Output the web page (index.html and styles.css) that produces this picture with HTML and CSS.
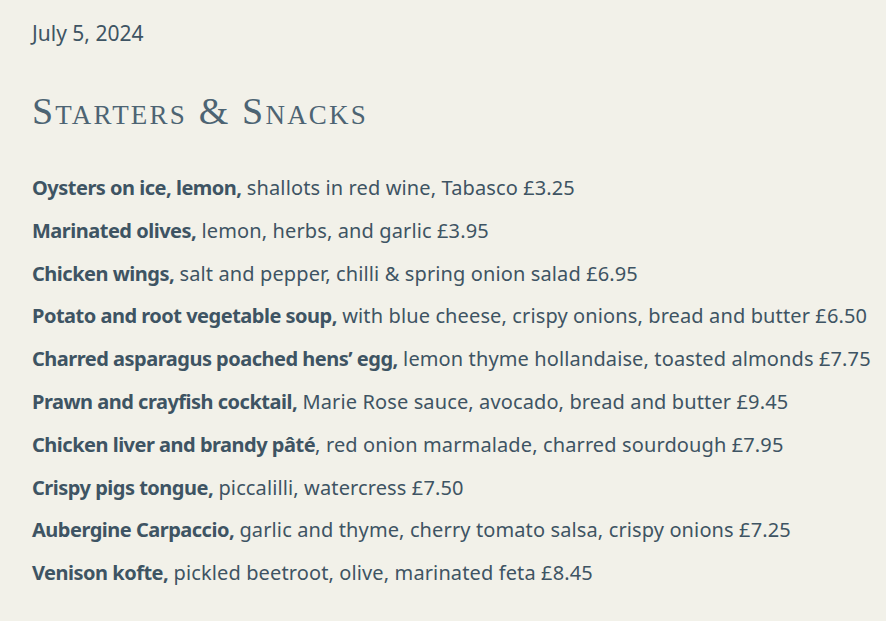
FILE: index.html
```html
<!DOCTYPE html>
<html lang="en">
<head>
<meta charset="utf-8">
<title>Menu</title>
<link rel="stylesheet" href="styles.css">
</head>
<body>
<main class="page">
  <p class="date">July 5, 2024</p>
  <h2 class="section-title">Starters &amp; Snacks</h2>
  <ul class="menu">
    <li><strong>Oysters on ice, lemon,</strong> shallots in red wine, Tabasco £3.25</li>
    <li><strong>Marinated olives,</strong> lemon, herbs, and garlic £3.95</li>
    <li><strong>Chicken wings,</strong> salt and pepper, chilli &amp; spring onion salad £6.95</li>
    <li><strong>Potato and root vegetable soup,</strong> with blue cheese, crispy onions, bread and butter £6.50</li>
    <li><strong>Charred asparagus poached hens’ egg,</strong> lemon thyme hollandaise, toasted almonds £7.75</li>
    <li><strong>Prawn and crayfish cocktail,</strong> Marie Rose sauce, avocado, bread and butter £9.45</li>
    <li><strong>Chicken liver and brandy pâté</strong>, red onion marmalade, charred sourdough £7.95</li>
    <li><strong>Crispy pigs tongue,</strong> piccalilli, watercress £7.50</li>
    <li><strong>Aubergine Carpaccio,</strong> garlic and thyme, cherry tomato salsa, crispy onions £7.25</li>
    <li><strong>Venison kofte,</strong> pickled beetroot, olive, marinated feta £8.45</li>
  </ul>
</main>
</body>
</html>
```
FILE: styles.css
```css
html, body {
  margin: 0;
  padding: 0;
  background: #f2f1e9;
}
body {
  font-family: "Noto Sans", "Open Sans", sans-serif;
  color: #3e5463;
}
.page {
  padding: 20px 0 0 32px;
}
.date {
  margin: 0;
  font-size: 21px;
  line-height: 26px;
}
.section-title {
  margin: 43px 0 40px;
  font-family: "Liberation Serif", serif;
  font-weight: normal;
  font-variant: small-caps;
  font-size: 38px;
  line-height: 44px;
  letter-spacing: 2.2px;
  color: #4d6473;
}
.menu {
  list-style: none;
  margin: 0;
  padding: 0;
  display: flex;
  flex-direction: column;
  gap: 12.8px;
}
.menu li {
  font-size: 20px;
  line-height: 30px;
  letter-spacing: 0.12px;
}
.menu strong {
  font-weight: 700;
  letter-spacing: -0.5px;
}
```
